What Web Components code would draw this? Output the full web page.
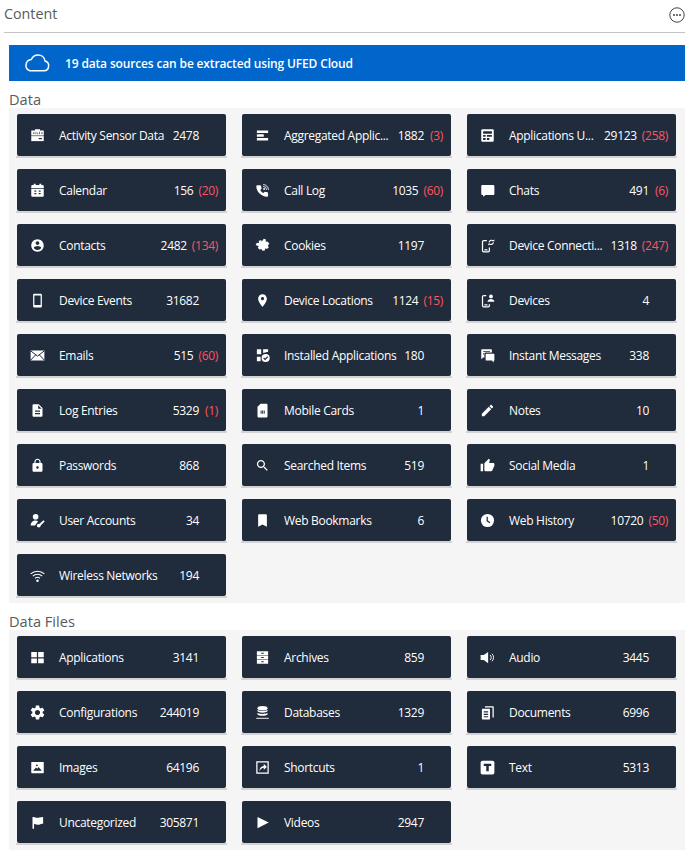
<!DOCTYPE html>
<html>
<head>
<meta charset="utf-8">
<title>Content</title>
<style>
  html, body { margin: 0; padding: 0; background: #fff; }
  body { font-family: "Open Sans", "Liberation Sans", sans-serif; width: 694px; }
</style>
</head>
<body>
<content-header label="Content"></content-header>
<cloud-banner>19 data sources can be extracted using UFED Cloud</cloud-banner>

<card-section label="Data">
  <data-card icon="activity" name="Activity Sensor Data" count="2478"></data-card>
  <data-card icon="aggregated" name="Aggregated Applic..." count="1882" extra="3"></data-card>
  <data-card icon="usage" name="Applications U..." count="29123" extra="258"></data-card>
  <data-card icon="calendar" name="Calendar" count="156" extra="20"></data-card>
  <data-card icon="call" name="Call Log" count="1035" extra="60"></data-card>
  <data-card icon="chat" name="Chats" count="491" extra="6"></data-card>
  <data-card icon="contact" name="Contacts" count="2482" extra="134"></data-card>
  <data-card icon="cookie" name="Cookies" count="1197"></data-card>
  <data-card icon="connect" name="Device Connecti..." count="1318" extra="247"></data-card>
  <data-card icon="phone" name="Device Events" count="31682"></data-card>
  <data-card icon="place" name="Device Locations" count="1124" extra="15"></data-card>
  <data-card icon="devices" name="Devices" count="4"></data-card>
  <data-card icon="mail" name="Emails" count="515" extra="60"></data-card>
  <data-card icon="installed" name="Installed Applications" count="180"></data-card>
  <data-card icon="im" name="Instant Messages" count="338"></data-card>
  <data-card icon="log" name="Log Entries" count="5329" extra="1"></data-card>
  <data-card icon="sd" name="Mobile Cards" count="1"></data-card>
  <data-card icon="pencil" name="Notes" count="10"></data-card>
  <data-card icon="lock" name="Passwords" count="868"></data-card>
  <data-card icon="search" name="Searched Items" count="519"></data-card>
  <data-card icon="thumb" name="Social Media" count="1"></data-card>
  <data-card icon="account" name="User Accounts" count="34"></data-card>
  <data-card icon="bookmark" name="Web Bookmarks" count="6"></data-card>
  <data-card icon="clock" name="Web History" count="10720" extra="50"></data-card>
  <data-card icon="wifi" name="Wireless Networks" count="194"></data-card>
</card-section>

<card-section label="Data Files">
  <data-card icon="apps" name="Applications" count="3141"></data-card>
  <data-card icon="archive" name="Archives" count="859"></data-card>
  <data-card icon="audio" name="Audio" count="3445"></data-card>
  <data-card icon="gear" name="Configurations" count="244019"></data-card>
  <data-card icon="database" name="Databases" count="1329"></data-card>
  <data-card icon="documents" name="Documents" count="6996"></data-card>
  <data-card icon="image" name="Images" count="64196"></data-card>
  <data-card icon="shortcut" name="Shortcuts" count="1"></data-card>
  <data-card icon="text" name="Text" count="5313"></data-card>
  <data-card icon="flag" name="Uncategorized" count="305871"></data-card>
  <data-card icon="play" name="Videos" count="2947"></data-card>
</card-section>

<script>
// icons are all drawn on a 24 box, dark parts use the card colour
const DARK = "#202b3c";
const ICONS = {
  activity: `<path d="M8 4V2h8v2h6v8H2V4z"/><path d="M2 13h20v8H2z"/><path fill="${DARK}" d="M5 7h2v2H5zM9 6h1v4H9zM12 7h1v3h-1zM15 6h1v4h-1zM18 7h2v2h-2zM14 16h5v2h-5z"/>`,
  aggregated: `<path d="M3 4h18v4H3zM3 10h11v4H3zM3 16h18v4H3z"/>`,
  usage: `<path fill-rule="evenodd" d="M4 2h16a2 2 0 0 1 2 2v16a2 2 0 0 1-2 2H4a2 2 0 0 1-2-2V4a2 2 0 0 1 2-2zm1 3v4h14V5zm0 6v3h4v-3zm6 0v3h8v-3zm-6 5v3h4v-3zm6 0v3h4v-3z"/>`,
  calendar: `<path fill-rule="evenodd" d="M6 1h3v2h6V1h3v2h2a2 2 0 0 1 2 2v15a2 2 0 0 1-2 2H4a2 2 0 0 1-2-2V5a2 2 0 0 1 2-2h2zM2 8v1h20V8zm5 4v2h3v-2zm7 0v2h3v-2zm-7 4v2h3v-2zm7 0v2h3v-2z"/>`,
  call: `<path d="M6.600 3.500l3 .6 1 5-2.200 2c1 2.200 2.800 4 5 5l2-2.200 5 1 .6 3v2c0 1.100-.9 2-2 2C10.500 21.900 2.100 13.500 2.100 5.500c0-1.100.9-2 2-2z"/><path fill="none" stroke="#fff" stroke-width="1.400" d="M13 2.500a8.500 8.500 0 0 1 8.500 8.500M13 5.500a5.500 5.500 0 0 1 5.500 5.500"/><circle cx="14.500" cy="9.500" r="1.500"/>`,
  chat: `<path d="M21 3H4C2.900 3 2 3.900 2 5v12c0 1.100.9 2 2 2h1v3l4-3h12c1.100 0 2-.9 2-2V5c0-1.100-.9-2-2-2z"/>`,
  contact: `<path d="M12 2C6.480 2 2 6.480 2 12s4.480 10 10 10 10-4.480 10-10S17.520 2 12 2zm0 3c1.660 0 3 1.340 3 3s-1.340 3-3 3-3-1.340-3-3 1.340-3 3-3zm0 14.200c-2.500 0-4.710-1.280-6-3.220.03-1.990 4-3.080 6-3.080 1.990 0 5.970 1.090 6 3.080-1.290 1.940-3.500 3.220-6 3.220z"/>`,
  cookie: `<path d="M14 1l3.500 1.500-.5 3 3.500.5 2.500 3-2.500 3 1.500 3-3 2.500-2.500-1-1 3.500-3.500.5-2-3-3 1-2.500-3 1.500-2.500L1 11l2-3.500 3.500.5-.5-3.500L10 3.500l1 2z"/>`,
  connect: `<path fill="none" stroke="#fff" stroke-width="2" d="M11 4H6a2 2 0 0 0-2 2v14a2 2 0 0 0 2 2h7a2 2 0 0 0 2-2v-5"/><path d="M7 18h5v2H7z"/><path fill="none" stroke="#fff" stroke-width="1.800" d="M14.500 7a4 4 0 0 1 7-2M21.500 7a4 4 0 0 1-7 2"/><path d="M20 5h3V2zM16 9h-3v3z"/>`,
  phone: `<path fill-rule="evenodd" d="M7 1h10c1.100 0 2 .9 2 2v18c0 1.100-.9 2-2 2H7c-1.100 0-2-.9-2-2V3c0-1.100.9-2 2-2zm0 3v15h10V4z"/>`,
  place: `<path d="M12 2C8.130 2 5 5.130 5 9c0 5.250 7 13 7 13s7-7.750 7-13c0-3.870-3.130-7-7-7zm0 9.500c-1.380 0-2.500-1.120-2.500-2.500s1.120-2.500 2.500-2.500 2.500 1.120 2.500 2.500-1.120 2.500-2.500 2.500z"/>`,
  devices: `<path fill="none" stroke="#fff" stroke-width="2" d="M10 4H6a2 2 0 0 0-2 2v14a2 2 0 0 0 2 2h7a2 2 0 0 0 2-2v-2"/><path d="M7 18h5v2H7z"/><circle cx="17.500" cy="5.500" r="3"/><path d="M12 14c0-3 3-4.500 5.500-4.500S23 11 23 14z"/>`,
  mail: `<path d="M1 4h22v16H1z"/><path fill="none" stroke="${DARK}" stroke-width="1.600" d="M1 4.500l11 8.500 11-8.500M1 19.500l8-8.500M23 19.500l-8-8.500"/>`,
  installed: `<path d="M3 2h7v8H3zM13 2h8v4l-8 2zM3 14h6v7H3z"/><circle cx="17" cy="16" r="6.500"/><path fill="none" stroke="${DARK}" stroke-width="1.800" d="M13.800 16l2.400 2.400 4-4.400"/>`,
  im: `<path d="M3 2h15a1 1 0 0 1 1 1v4H9a2 2 0 0 0-2 2v6H5l-3 3V3a1 1 0 0 1 1-1z"/><path d="M10 9h12a1 1 0 0 1 1 1v9a1 1 0 0 1-1 1v3l-3-3h-9a1 1 0 0 1-1-1v-9a1 1 0 0 1 1-1z"/><path fill="${DARK}" d="M5 5h11v1.500H5zM5 8.500h1.500v2H5z"/>`,
  log: `<path d="M14 2H6c-1.100 0-2 .9-2 2v16c0 1.100.9 2 2 2h12c1.100 0 2-.9 2-2V8zm2 16H8v-2h8zm0-4H8v-2h8zm-3-5V3.500L18.500 9z"/>`,
  sd: `<path d="M18 1H9L4 6v15c0 1.100.9 2 2 2h12c1.100 0 2-.9 2-2V3c0-1.100-.9-2-2-2z"/><path fill="${DARK}" d="M9 12h1.500v5H9zM11.500 12H13v5h-1.500zM14 12h1.500v5H14z"/>`,
  pencil: `<path d="M3 17.250V21h3.750L17.810 9.940l-3.750-3.750zM20.710 7.040c.39-.39.39-1.020 0-1.410l-2.340-2.340c-.39-.39-1.020-.39-1.410 0l-1.830 1.830 3.750 3.750z"/>`,
  lock: `<path d="M18 8h-1V6c0-2.760-2.240-5-5-5S7 3.240 7 6v2H6c-1.100 0-2 .9-2 2v10c0 1.100.9 2 2 2h12c1.100 0 2-.9 2-2V10c0-1.100-.9-2-2-2zm-6 9c-1.100 0-2-.9-2-2s.9-2 2-2 2 .9 2 2-.9 2-2 2zm3.100-9H8.900V6c0-1.710 1.390-3.100 3.100-3.100 1.710 0 3.100 1.390 3.100 3.100z"/>`,
  search: `<path d="M15.500 14h-.79l-.28-.27C15.410 12.590 16 11.110 16 9.500 16 5.910 13.090 3 9.500 3S3 5.910 3 9.500 5.910 16 9.500 16c1.610 0 3.090-.59 4.230-1.570l.27.28v.79l5 4.990L20.490 19zm-6 0C7.010 14 5 11.990 5 9.500S7.010 5 9.500 5 14 7.010 14 9.500 11.990 14 9.500 14z"/>`,
  thumb: `<path d="M1 21h4V9H1zm22-11c0-1.100-.9-2-2-2h-6.310l.95-4.570.03-.32c0-.41-.17-.79-.44-1.060L14.170 1 7.590 7.590C7.220 7.950 7 8.450 7 9v10c0 1.100.9 2 2 2h9c.83 0 1.540-.5 1.840-1.220l3.020-7.050c.09-.23.14-.47.14-.73z"/>`,
  account: `<circle cx="9" cy="6" r="4.500"/><path d="M1 20c0-5 4-8 8-8 1.500 0 3 .4 4 1.200L8 20z"/><circle cx="14" cy="20" r="3"/><path d="M14.500 18l7-6.500 2 2-7 7z"/>`,
  bookmark: `<path d="M17 2H7c-1.100 0-2 .9-2 2v18l7-3.500 7 3.500V4c0-1.100-.9-2-2-2z"/>`,
  clock: `<circle cx="12" cy="12" r="10.500"/><path fill="none" stroke="${DARK}" stroke-width="2" d="M11.500 6v6.500l4.500 3"/>`,
  wifi: `<path fill="none" stroke="#fff" stroke-width="1.700" d="M1 9.500a16 16 0 0 1 22 0M4.500 13a11 11 0 0 1 15 0M8 16.500a6 6 0 0 1 8 0"/><circle cx="12" cy="20.500" r="2"/>`,
  apps: `<path d="M2 3h9v8.500H2zM13 3h9v8.500h-9zM2 13.500h9V21H2zM13 13.500h9V21h-9z"/>`,
  archive: `<path d="M3 2h18v6.300H3zM3 9.300h18v5.400H3zM3 15.700h18V22H3z"/><path fill="${DARK}" d="M10 4.500h4V6h-4zM10 11.300h4v1.500h-4zM10 18h4v1.500h-4z"/>`,
  audio: `<path d="M1 8h5l7-5v18l-7-5H1z"/><path fill="none" stroke="#fff" stroke-width="1.500" d="M16 8a5 5 0 0 1 0 8M19 6a8 8 0 0 1 0 12"/>`,
  gear: `<g transform="translate(12 12) scale(1.150) translate(-12 -12)"><path d="M19.140 12.940c.04-.3.06-.61.06-.94 0-.32-.02-.64-.07-.94l2.030-1.580c.18-.14.23-.41.12-.61l-1.920-3.320c-.12-.22-.37-.29-.59-.22l-2.390.96c-.5-.38-1.030-.7-1.620-.94l-.36-2.540c-.04-.24-.24-.41-.48-.41h-3.840c-.24 0-.43.17-.47.41l-.36 2.540c-.59.24-1.130.57-1.620.94l-2.390-.96c-.22-.08-.47 0-.59.22L2.740 8.870c-.12.21-.08.47.12.61l2.030 1.580c-.05.3-.09.63-.09.94s.02.64.07.94l-2.030 1.580c-.18.14-.23.41-.12.61l1.920 3.320c.12.22.37.29.59.22l2.390-.96c.5.38 1.030.7 1.620.94l.36 2.540c.05.24.24.41.48.41h3.840c.24 0 .44-.17.47-.41l.36-2.540c.59-.24 1.130-.56 1.620-.94l2.390.96c.22.08.47 0 .59-.22l1.920-3.320c.12-.22.07-.47-.12-.61zM12 15.600c-1.980 0-3.600-1.620-3.600-3.600s1.620-3.600 3.600-3.600 3.600 1.620 3.600 3.600-1.620 3.600-3.600 3.600z"/></g>`,
  database: `<ellipse cx="12" cy="5" rx="8" ry="3.500"/><path d="M4 7.500c2 2.500 14 2.500 16 0V10c-2 3-14 3-16 0zM4 12.500c2 2.500 14 2.500 16 0V15c-2 3-14 3-16 0z"/><path d="M2 20.500h20V22H2z"/>`,
  documents: `<path d="M4 6h11a1 1 0 0 1 1 1v15a1 1 0 0 1-1 1H4a1 1 0 0 1-1-1V7a1 1 0 0 1 1-1z"/><path d="M8 2h13a1 1 0 0 1 1 1v17h-2V4H8z"/><path fill="${DARK}" d="M6 10h7v2H6zM6 14h7v2H6zM6 18h7v1.500H6z"/>`,
  image: `<path d="M3 3h18a1 1 0 0 1 1 1v16a1 1 0 0 1-1 1H3a1 1 0 0 1-1-1V4a1 1 0 0 1 1-1z"/><path fill="${DARK}" d="M5 17l4.500-5 2 2 2-3L19 17z"/><circle cx="11" cy="8.500" r="1.500" fill="${DARK}"/>`,
  shortcut: `<path fill="none" stroke="#fff" stroke-width="2" d="M3 3h18v18H3z"/><path d="M7 18c0-5 3-8 7-8.500V6l5 5-5 4.500V12.500c-3 0-5 2-7 5.500z"/>`,
  text: `<path d="M4 1h16a3 3 0 0 1 3 3v16a3 3 0 0 1-3 3H4a3 3 0 0 1-3-3V4a3 3 0 0 1 3-3z"/><path fill="${DARK}" d="M6 6h12v3.500h-4V18h-4V9.500H6z"/>`,
  flag: `<path d="M4 3h2.500v19H4zM6.500 3c4 1.500 6 2 8.500 1 2-.8 4-1 6-1v11c-3 0-4 1-7 1.500-2.500.3-5-.5-7.500-1.500z"/>`,
  play: `<path d="M4 3l18 9-18 9z"/>`
};

class ContentHeader extends HTMLElement {
  constructor() {
    super();
    this.attachShadow({ mode: "open" });
  }

  connectedCallback() {
    this.shadowRoot.innerHTML = `
      <style>
        :host {
          display: flex;
          align-items: center;
          justify-content: space-between;
          height: 32px;
          margin: 0 9px 0 4px;
          border-bottom: 1px solid #c4c4c4;
          color: #5a5a5a;
          font-size: 14.300px;
        }
        span { position: relative; top: -3px; }
        svg { display: block; margin-bottom: 2px; }
      </style>
      <span>${this.getAttribute("label")}</span>
      <svg width="16" height="16" viewBox="0 0 16 16">
        <circle cx="8" cy="8" r="7.200" fill="none" stroke="#444" stroke-width="1"/>
        <circle cx="5" cy="8" r="1" fill="#444"/>
        <circle cx="8" cy="8" r="1" fill="#444"/>
        <circle cx="11" cy="8" r="1" fill="#444"/>
      </svg>
    `;
  }
}

class CloudBanner extends HTMLElement {
  constructor() {
    super();
    this.attachShadow({ mode: "open" });
    this.shadowRoot.innerHTML = `
      <style>
        :host {
          display: flex;
          align-items: center;
          gap: 15px;
          height: 36px;
          margin: 12px 9px 0 9px;
          padding-left: 15px;
          background: #0066cc;
          color: #fff;
          font-size: 12px;
          font-weight: 600;
          letter-spacing: -0.150px;
        }
        svg { display: block; }
      </style>
      <svg width="26" height="18" viewBox="0 0 26 18" fill="none" stroke="#fff" stroke-width="1.500">
        <path d="M6 16.800h14a5 5 0 0 0 1-9.800C20.500 3.500 17.500 1 14 1c-3 0-5.500 1.800-6.700 4.500A5.800 5.800 0 0 0 6 16.800z"/>
      </svg>
      <slot></slot>
    `;
  }
}

class CardSection extends HTMLElement {
  constructor() {
    super();
    this.attachShadow({ mode: "open" });
  }

  connectedCallback() {
    this.shadowRoot.innerHTML = `
      <style>
        :host { display: block; margin: 0 9px; }
        h2 {
          margin: 0;
          height: 27px;
          display: flex;
          align-items: flex-end;
          font-size: 14.600px;
          font-weight: 400;
          line-height: 18px;
          color: #5a5a5a;
        }
        .grid {
          display: grid;
          grid-template-columns: repeat(3, 211px);
          column-gap: 14px;
          row-gap: 11px;
          padding: 6px 8px 5px 7px;
          background: #f5f5f5;
        }
      </style>
      <h2>${this.getAttribute("label")}</h2>
      <div class="grid"><slot></slot></div>
    `;
  }
}

class DataCard extends HTMLElement {
  constructor() {
    super();
    this.attachShadow({ mode: "open" });
  }

  connectedCallback() {
    const extra = this.getAttribute("extra");
    this.shadowRoot.innerHTML = `
      <style>
        :host {
          display: block;
          height: 44px;
          box-sizing: border-box;
          border-bottom: 2px solid #d3d3d3;
          font-size: 12px;
          letter-spacing: -0.300px;
        }
        .card {
          display: flex;
          align-items: center;
          height: 42px;
          margin: 0 1px;
          padding: 0 8px 0 13px;
          background: ${DARK};
          border-radius: 2px;
          color: #fff;
        }
        svg { flex: none; display: block; fill: #fff; }
        .name {
          flex: 1;
          min-width: 0;
          margin: 0 6px 0 14px;
          white-space: nowrap;
        }
        .count { flex: none; }
        .extra {
          flex: none;
          min-width: 19px;
          box-sizing: border-box;
          padding-left: 5px;
          text-align: right;
          color: #ff5560;
        }
      </style>
      <div class="card">
        <svg width="15" height="15" viewBox="0 0 24 24">${ICONS[this.getAttribute("icon")]}</svg>
        <span class="name">${this.getAttribute("name")}</span>
        <span class="count">${this.getAttribute("count")}</span>
        <span class="extra">${extra ? `(${extra})` : ""}</span>
      </div>
    `;
  }
}

customElements.define("content-header", ContentHeader);
customElements.define("cloud-banner", CloudBanner);
customElements.define("card-section", CardSection);
customElements.define("data-card", DataCard);
</script>
</body>
</html>
